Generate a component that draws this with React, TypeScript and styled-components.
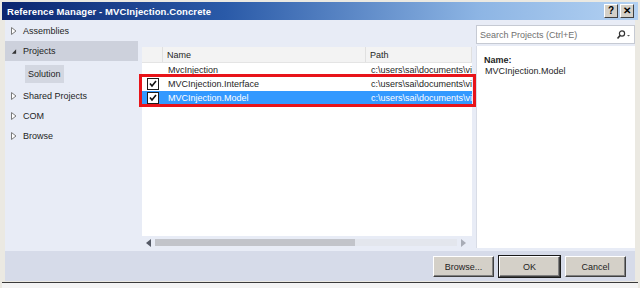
import React from 'react'
import styled, { createGlobalStyle } from 'styled-components';

const Global = createGlobalStyle`
    html, body {
        margin: 0;
        padding: 0;
        background: #ffffff;
    }
    body {
        font-family: "Liberation Sans", Arial, sans-serif;
        font-size: 9px;
        color: #1e1e1e;
    }
`;

const Frame = styled.div`
    width: 640px;
    height: 288px;
    box-sizing: border-box;
    background: #ebe9e2;
    padding: 2px 2px 0;
    display: flex;
    flex-direction: column;
    overflow: hidden;
`;

const TitleBar = styled.div`
    height: 18px;
    flex: none;
    display: flex;
    align-items: center;
    padding: 0 4px 0 5px;
    background: linear-gradient(to right, #0b2670 0%, #2a5aa8 35%, #8db5e4 75%, #b3d1f2 100%);
`;

const Title = styled.span`
    flex: 1;
    color: #ffffff;
    font-weight: bold;
    font-size: 9.5px;
    letter-spacing: 0.1px;
`;

const CaptionButton = styled.span`
    width: 12px;
    height: 12px;
    margin-left: 2px;
    display: flex;
    align-items: center;
    justify-content: center;
    background: #d4d0c8;
    border: 1px solid;
    border-color: #ffffff #404040 #404040 #ffffff;
    font-weight: bold;
    font-size: 10px;
    color: #000000;
    line-height: 1;
`;

const Body = styled.div`
    flex: 1;
    margin: 0 3px;
    display: grid;
    grid-template-columns: 133px minmax(0, 1fr) 159px;
    column-gap: 4px;
    background: #e8ecf6;
    min-height: 0;
`;

const Nav = styled.div`
    display: flex;
    flex-direction: column;
    padding-top: 1px;
`;

const NavItem = styled.div<{ $selected?: boolean }>`
    height: 20px;
    display: flex;
    align-items: center;
    padding-left: 6px;
    gap: 6px;
    background: ${p => (p.$selected ? '#cdd1dc' : 'transparent')};
    color: #1e1e1e;
`;

const Arrow = styled.span`
    width: 6px;
    height: 8px;
    display: flex;
    align-items: center;
    justify-content: center;
`;

const SubItem = styled.div`
    height: 25px;
    display: flex;
    align-items: center;
    padding-left: 20px;
`;

const SubLabel = styled.span`
    background: #d3d7e1;
    padding: 4px 3px;
`;

const Main = styled.div`
    display: flex;
    flex-direction: column;
    padding-top: 27px;
    padding-bottom: 2px;
    min-height: 0;
    min-width: 0;
`;

const List = styled.div`
    position: relative;
    flex: 1;
    background: #ffffff;
`;

const HeaderRow = styled.div`
    height: 16px;
    display: grid;
    grid-template-columns: 21px 203px minmax(0, 1fr);
    background: #f3f3f3;
    border-bottom: 1px solid #e4e4e4;
    box-sizing: border-box;
`;

const HeaderCell = styled.div`
    display: flex;
    align-items: center;
    padding-left: 4px;
    border-right: 1px solid #e0e0e0;
    color: #1e1e1e;
`;

const Row = styled.div<{ $selected?: boolean }>`
    height: 14px;
    display: grid;
    grid-template-columns: 21px 203px minmax(0, 1fr);
    background: ${p => (p.$selected ? '#3399ff' : 'transparent')};
    color: ${p => (p.$selected ? '#ffffff' : '#1e1e1e')};
    overflow: hidden;
`;

const Cell = styled.div`
    padding-left: 5px;
    line-height: 14px;
    white-space: nowrap;
    overflow: hidden;
    text-overflow: clip;
`;

const CheckCell = styled.div`
    display: flex;
    align-items: center;
    padding-left: 5px;
`;

const Box = styled.span`
    width: 10px;
    height: 10px;
    border: 1px solid #1c1c1c;
    background: #ffffff;
    display: flex;
    align-items: center;
    justify-content: center;
`;

const Highlight = styled.div`
    position: absolute;
    left: -3px;
    top: 27px;
    width: 337px;
    height: 33px;
    box-sizing: border-box;
    border: 3px solid #e8141a;
    pointer-events: none;
`;

const HScroll = styled.div`
    height: 13px;
    flex: none;
    display: flex;
    align-items: center;
    padding: 0 6px 0 4px;
    gap: 4px;
    background: #e8ecf6;
`;

const Track = styled.div`
    flex: 1;
    height: 7px;
    background: #e3e6ed;
    display: flex;
`;

const Thumb = styled.div`
    width: 200px;
    background: #c2c4ca;
`;

const Side = styled.div`
    display: flex;
    flex-direction: column;
    padding: 5px 0 3px;
    gap: 2px;
    min-height: 0;
`;

const Search = styled.div`
    height: 19px;
    box-sizing: border-box;
    background: #ffffff;
    border: 1px solid #c6cad3;
    display: flex;
    align-items: center;
    padding: 0 4px 0 3px;
    color: #6f6f6f;
`;

const SearchText = styled.span`
    flex: 1;
`;

const Details = styled.div`
    flex: 1;
    background: #ffffff;
    border-left: 1px solid #d8dce6;
    padding: 9px 7px;
`;

const DetailLabel = styled.div`
    font-weight: bold;
    color: #1e1e1e;
    line-height: 11px;
`;

const DetailValue = styled.div`
    color: #1e1e1e;
    line-height: 11px;
    margin-left: 1px;
`;

const Footer = styled.div`
    height: 30px;
    flex: none;
    margin: 0 3px;
    background: #d6dbe9;
    display: flex;
    align-items: center;
    justify-content: flex-end;
    gap: 5px;
    padding-right: 9px;
`;

const Button = styled.button<{ $default?: boolean }>`
    width: 61px;
    height: 21px;
    margin-top: 1px;
    font-family: "Liberation Sans", Arial, sans-serif;
    font-size: 9px;
    color: #1e1e1e;
    background: #d4d0c8;
    border: 1px solid;
    border-color: #ffffff #404040 #404040 #ffffff;
    box-shadow: ${p => (p.$default ? '0 0 0 1px #1a1a1a, inset -1px -1px 0 #808080' : 'inset -1px -1px 0 #808080')};
    padding: 0;
`;

const BottomEdge = styled.div`
    height: 5px;
    flex: none;
    border-top: 1px solid #3a3a3a;
    background: #f4f4f4;
    margin-top: 1px;
`;

const Collapsed = () => (
    <svg width="6" height="8" viewBox="0 0 6 8">
        <path d="M0.5 0.5 L5 4 L0.5 7.5 Z" fill="#ffffff" stroke="#7a7a7a" strokeWidth="1" />
    </svg>
);

const Expanded = () => (
    <svg width="7" height="7" viewBox="0 0 7 7">
        <path d="M6 1 L6 6 L1 6 Z" fill="#333333" />
    </svg>
);

const Check = () => (
    <svg width="8" height="8" viewBox="0 0 8 8">
        <path d="M1 3.5 L3 6 L7 1" fill="none" stroke="#111111" strokeWidth="1.6" />
    </svg>
);

const Magnifier = () => (
    <svg width="14" height="10" viewBox="0 0 14 10">
        <circle cx="6" cy="3.5" r="2.6" fill="none" stroke="#333" strokeWidth="1.2" />
        <path d="M4.2 5.4 L1.5 8.5" stroke="#333" strokeWidth="1.6" />
        <path d="M11 5 L14 5 L12.5 6.6 Z" fill="#555" />
    </svg>
);

const PATH = 'c:\\users\\sai\\documents\\visual studio';

const rows = [
    { name: 'MvcInjection', checked: false, selected: false },
    { name: 'MVCInjection.Interface', checked: true, selected: false },
    { name: 'MVCInjection.Model', checked: true, selected: true },
];

const App = () => {
    return (
        <>
            <Global />
            <Frame>
                <TitleBar>
                    <Title>Reference Manager - MVCInjection.Concrete</Title>
                    <CaptionButton>?</CaptionButton>
                    <CaptionButton>✕</CaptionButton>
                </TitleBar>
                <Body>
                    <Nav>
                        <NavItem><Arrow><Collapsed /></Arrow>Assemblies</NavItem>
                        <NavItem $selected><Arrow><Expanded /></Arrow>Projects</NavItem>
                        <SubItem><SubLabel>Solution</SubLabel></SubItem>
                        <NavItem><Arrow><Collapsed /></Arrow>Shared Projects</NavItem>
                        <NavItem><Arrow><Collapsed /></Arrow>COM</NavItem>
                        <NavItem><Arrow><Collapsed /></Arrow>Browse</NavItem>
                    </Nav>
                    <Main>
                        <List>
                            <HeaderRow>
                                <HeaderCell />
                                <HeaderCell>Name</HeaderCell>
                                <HeaderCell>Path</HeaderCell>
                            </HeaderRow>
                            {rows.map(r => (
                                <Row key={r.name} $selected={r.selected}>
                                    <CheckCell>{r.checked && <Box><Check /></Box>}</CheckCell>
                                    <Cell>{r.name}</Cell>
                                    <Cell>{PATH}</Cell>
                                </Row>
                            ))}
                            <Highlight />
                        </List>
                        <HScroll>
                            <svg width="5" height="8" viewBox="0 0 5 8"><path d="M5 0 L0 4 L5 8 Z" fill="#555a66" /></svg>
                            <Track><Thumb /></Track>
                            <svg width="5" height="8" viewBox="0 0 5 8"><path d="M0 0 L5 4 L0 8 Z" fill="#a8acb6" /></svg>
                        </HScroll>
                    </Main>
                    <Side>
                        <Search>
                            <SearchText>Search Projects (Ctrl+E)</SearchText>
                            <Magnifier />
                        </Search>
                        <Details>
                            <DetailLabel>Name:</DetailLabel>
                            <DetailValue>MVCInjection.Model</DetailValue>
                        </Details>
                    </Side>
                </Body>
                <Footer>
                    <Button>Browse...</Button>
                    <Button $default>OK</Button>
                    <Button>Cancel</Button>
                </Footer>
                <BottomEdge />
            </Frame>
        </>
    );
}

export default App
